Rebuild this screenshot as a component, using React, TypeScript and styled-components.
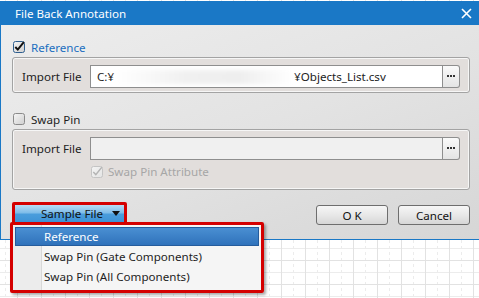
import styled, { createGlobalStyle } from "styled-components";

const Global = createGlobalStyle`
  html, body {
    margin: 0;
    padding: 0;
    width: 479px;
    height: 298px;
    overflow: hidden;
    font-family: "Noto Sans", "DejaVu Sans", sans-serif;
    background-color: #ffffff;
    background-image:
      linear-gradient(90deg, #e2e2e2 1px, transparent 1px),
      linear-gradient(0deg, #e2e2e2 1px, transparent 1px),
      repeating-linear-gradient(0deg, #ffffff 0 3px, transparent 3px 6px),
      linear-gradient(90deg, #ececec 1px, transparent 1px),
      linear-gradient(0deg, #ececec 1px, transparent 1px);
    background-size: 24px 24px, 24px 24px, 6px 6px, 12px 12px, 12px 12px;
    background-position: 17px 0, 0 21px, 0 0, 5px 0, 0 9px;
  }
`;

const Page = styled.div`
  position: relative;
  padding-top: 1px;
`;

const Dialog = styled.div`
  width: 480px;
  border-left: 1px solid #1a78c6;
  border-bottom: 1px solid #1a78c6;
  box-sizing: border-box;
`;

const TitleBar = styled.div`
  height: 24px;
  background: #1a78c6;
  color: #ffffff;
  display: flex;
  align-items: center;
  justify-content: space-between;
  padding: 0 8px 0 14px;
  font-size: 11.6px;
`;

const Body = styled.div`
  height: 214px;
  background: linear-gradient(160deg, #ededed 0%, #e3e3e3 50%, #d6d6d6 100%);
  padding: 15px 10px 0 11px;
  box-sizing: border-box;
  display: flex;
  flex-direction: column;
  font-size: 11.6px;
`;

const CheckRow = styled.label<{ $active?: boolean; $mt?: number }>`
  display: flex;
  align-items: center;
  gap: 6px;
  height: 14px;
  margin-top: ${(p) => p.$mt ?? 0}px;
  color: ${(p) => (p.$active ? "#1b6fc0" : "#1e1e1e")};
  margin-left: 1px;
`;

const Group = styled.div<{ $h: number }>`
  margin-top: 3px;
  height: ${(p) => p.$h}px;
  background: #e2dedc;
  border: 1px solid #a3a3a3;
  border-radius: 3px;
  box-shadow: inset 0 0 0 1px #f6f6f6;
  box-sizing: border-box;
  padding: 7px 9px 0 9px;
  display: flex;
  flex-direction: column;
`;

const FieldRow = styled.div`
  display: flex;
  align-items: center;
  height: 23px;
`;

const FieldLabel = styled.span`
  width: 68px;
  color: #222;
`;

const Input = styled.div<{ $disabled?: boolean }>`
  flex: 1;
  min-width: 0;
  height: 23px;
  box-sizing: border-box;
  border: 1px solid #8e8e8e;
  background: ${(p) => (p.$disabled ? "#f0f0f0" : "#ffffff")};
  display: flex;
  align-items: center;
  padding-left: 6px;
  white-space: nowrap;
  overflow: hidden;
  color: #222;
`;

const Blur = styled.span`
  flex: 0 0 178px;
  height: 14px;
  margin: 0 1px;
  background: linear-gradient(90deg, #fff 0%, #f0f0f0 40%, #eeeeee 70%, #fff 100%);
  filter: blur(2px);
`;

const Browse = styled.div`
  width: 17px;
  height: 23px;
  box-sizing: border-box;
  border: 1px solid #8e8e8e;
  border-left: none;
  border-radius: 0 3px 3px 0;
  background: linear-gradient(#fafafa, #e4e4e4);
  display: flex;
  align-items: center;
  justify-content: center;
  gap: 1px;
  padding-bottom: 2px;
`;

const Dot = styled.span`
  width: 2px;
  height: 2px;
  background: #333;
`;

const SubCheck = styled.div`
  display: flex;
  align-items: center;
  gap: 5px;
  margin: 4px 0 0 69px;
  color: #a6a6a6;
`;

const Footer = styled.div`
  margin-top: 12px;
  display: flex;
  align-items: flex-start;
`;

const SampleWrap = styled.div`
  position: relative;
  border: 3px solid #d40000;
  border-radius: 2px;
`;

const SampleButton = styled.div`
  width: 109px;
  height: 17px;
  box-sizing: border-box;
  padding-left: 26px;
  background: linear-gradient(#b9dcf4 0%, #7fbde9 45%, #4a9ddc 55%, #3f93d6 100%);
  display: flex;
  align-items: center;
  color: #111;
`;

const Caret = styled.span`
  width: 0;
  height: 0;
  border-left: 4px solid transparent;
  border-right: 4px solid transparent;
  border-top: 5px solid #111;
  margin-left: 9px;
`;

const Spacer = styled.div`
  flex: 1;
`;

const DialogButton = styled.div<{ $ml?: number }>`
  margin-top: 3px;
  margin-left: ${(p) => p.$ml ?? 0}px;
  width: 72px;
  height: 20px;
  box-sizing: border-box;
  border: 1px solid #6e6e6e;
  border-radius: 3px;
  background: linear-gradient(#f6f6f6 0%, #e8e8e8 50%, #d6d6d6 100%);
  display: flex;
  align-items: center;
  justify-content: center;
  color: #111;
`;

const Menu = styled.div`
  position: absolute;
  left: -5px;
  top: 17px;
  width: 254px;
  border: 3px solid #d40000;
  border-radius: 2px;
  box-sizing: border-box;
  background: linear-gradient(90deg, #ececec 0 28px, #d8d8d8 28px 29px, #f5f5f5 29px);
  padding: 2px 2px 3px 2px;
  box-shadow: 2px 2px 3px rgba(0, 0, 0, 0.35);
  z-index: 5;
`;

const MenuItem = styled.div<{ $selected?: boolean; $h: number }>`
  height: ${(p) => p.$h}px;
  box-sizing: border-box;
  display: flex;
  align-items: center;
  color: ${(p) => (p.$selected ? "#ffffff" : "#1e1e1e")};
  background: ${(p) =>
    p.$selected ? "linear-gradient(#4a8fd2, #2f72bb)" : "transparent"};
  border: ${(p) => (p.$selected ? "1px solid #255c9c" : "none")};
  padding-left: ${(p) => (p.$selected ? 28 : 29)}px;
`;

const CheckBox = ({ checked, disabled }: { checked?: boolean; disabled?: boolean }) => (
  <svg width="12" height="12" viewBox="0 0 12 12">
    <defs>
      <linearGradient id={disabled ? "cbd" : "cb"} x1="0" y1="0" x2="1" y2="1">
        <stop offset="0" stopColor={disabled ? "#f4f4f4" : "#f6f6f6"} />
        <stop offset="1" stopColor={disabled ? "#e4e4e4" : "#cfcfcf"} />
      </linearGradient>
    </defs>
    <rect
      x="0.5"
      y="0.5"
      width="11"
      height="11"
      rx="2"
      fill={`url(#${disabled ? "cbd" : "cb"})`}
      stroke={disabled ? "#c4c4c4" : checked ? "#2f5f8f" : "#8a8a8a"}
    />
    {checked && (
      <path
        d="M2.3 6 L4.8 8.6 L10.8 1.2"
        fill="none"
        stroke={disabled ? "#b4b4b4" : "#111"}
        strokeWidth={disabled ? 1.4 : 2}
      />
    )}
  </svg>
);

const Close = () => (
  <svg width="11" height="11" viewBox="0 0 11 11">
    <path d="M1 1 L10 10 M10 1 L1 10" stroke="#fff" strokeWidth="1.6" />
  </svg>
);

const Dots = () => (
  <Browse>
    <Dot />
    <Dot />
    <Dot />
  </Browse>
);

export default function App() {
  return (
    <>
      <Global />
      <Page>
        <Dialog>
          <TitleBar>
            <span>File Back Annotation</span>
            <Close />
          </TitleBar>
          <Body>
            <CheckRow $active>
              <CheckBox checked />
              Reference
            </CheckRow>
            <Group $h={36}>
              <FieldRow>
                <FieldLabel>Import File</FieldLabel>
                <Input>
                  <span>C:¥</span>
                  <Blur />
                  <span>¥Objects_List.csv</span>
                </Input>
                <Dots />
              </FieldRow>
            </Group>
            <CheckRow $mt={19}>
              <CheckBox />
              Swap Pin
            </CheckRow>
            <Group $h={61}>
              <FieldRow>
                <FieldLabel>Import File</FieldLabel>
                <Input $disabled />
                <Dots />
              </FieldRow>
              <SubCheck>
                <CheckBox checked disabled />
                Swap Pin Attribute
              </SubCheck>
            </Group>
            <Footer>
              <SampleWrap>
                <SampleButton>
                  Sample File
                  <Caret />
                </SampleButton>
                <Menu>
                  <MenuItem $selected $h={19}>Reference</MenuItem>
                  <MenuItem $h={20}>Swap Pin (Gate Components)</MenuItem>
                  <MenuItem $h={21}>Swap Pin (All Components)</MenuItem>
                </Menu>
              </SampleWrap>
              <Spacer />
              <DialogButton>O K</DialogButton>
              <DialogButton $ml={10}>Cancel</DialogButton>
            </Footer>
          </Body>
        </Dialog>
      </Page>
    </>
  );
}
